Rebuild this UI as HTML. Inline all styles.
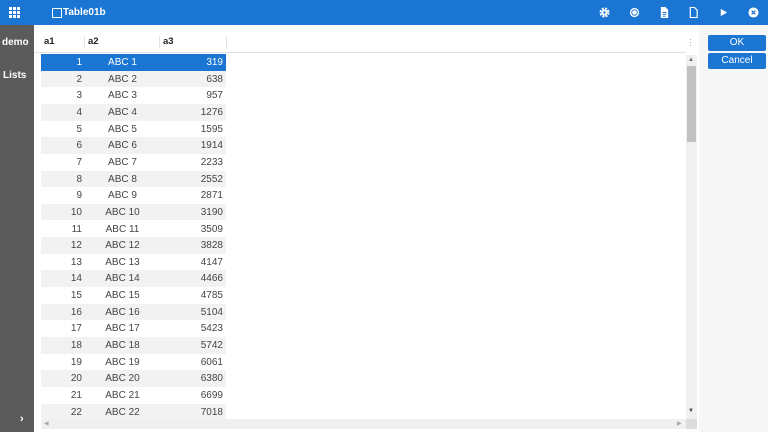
<!DOCTYPE html>
<html><head><style>
*{margin:0;padding:0;box-sizing:border-box}
body{width:768px;height:432px;overflow:hidden;background:#f0f0f0;font-family:"Liberation Sans",sans-serif;font-size:10px;color:#333;position:relative}
.top{position:absolute;left:0;top:0;width:768px;height:25px;background:#1a76d2}
.side{position:absolute;left:0;top:25px;width:34px;height:407px;background:#5b5b5b;color:#fff;font-weight:bold;font-size:10px}
.main{position:absolute;left:34px;top:25px;width:665px;height:407px;background:#fff}
.right{position:absolute;left:699px;top:25px;width:69px;height:407px;background:#f6f6f6}
.btn{position:absolute;left:708px;width:58px;height:16px;background:#1a76d2;color:#fff;text-align:center;line-height:16px;font-size:10px;border-radius:2px}
.hdr{position:absolute;top:36px;font-weight:bold;font-size:9.5px;color:#222}
.row{position:absolute;left:41px;width:185px;height:16.65px;font-size:10px;line-height:17.5px;color:#444}
.row span{position:absolute}
.c1{right:144px}.c2{left:44px;width:75px;text-align:center}.c3{right:3px}
.ico{position:absolute;top:7px;width:11px;height:11px}
</style></head><body>
<div class="top">
<svg style="position:absolute;left:9px;top:7px" width="11" height="11" fill="#fff"><rect x="0" y="0" width="3" height="3"/><rect x="4" y="0" width="3" height="3"/><rect x="8" y="0" width="3" height="3"/><rect x="0" y="4" width="3" height="3"/><rect x="4" y="4" width="3" height="3"/><rect x="8" y="4" width="3" height="3"/><rect x="0" y="8" width="3" height="3"/><rect x="4" y="8" width="3" height="3"/><rect x="8" y="8" width="3" height="3"/></svg>
<div style="position:absolute;left:52px;top:8px;width:10px;height:10px;border:1.5px solid #fff"></div>
<div style="position:absolute;left:63px;top:7px;color:#fff;font-size:10px;font-weight:bold">Table01b</div>
<svg class="ico" style="left:599px" viewBox="0 0 12 12"><circle cx="6" cy="6" r="4" fill="none" stroke="#fff" stroke-width="3" stroke-dasharray="2 1.2"/><circle cx="6" cy="6" r="3.2" fill="#fff"/><circle cx="6" cy="6" r="1.3" fill="#1a76d2"/></svg>
<svg class="ico" style="left:629px" viewBox="0 0 12 12"><circle cx="6" cy="6" r="5" fill="#fff"/><circle cx="6" cy="6" r="3" fill="none" stroke="#1a76d2" stroke-width="1"/></svg>
<svg class="ico" style="left:659px" viewBox="0 0 12 12"><path d="M2 0h5l3 3v9H2z" fill="#fff"/><path d="M4 6h4M4 8h4M4 10h3" stroke="#1a76d2"/></svg>
<svg class="ico" style="left:688px" viewBox="0 0 12 12"><path d="M2.5 .5h4.5l3 3v8h-7.5z" fill="none" stroke="#fff" stroke-width="1.3"/></svg>
<svg class="ico" style="left:718px" viewBox="0 0 12 12"><path d="M3 2l7 4-7 4z" fill="#fff"/></svg>
<svg class="ico" style="left:748px" viewBox="0 0 12 12"><circle cx="6" cy="6" r="5.5" fill="#fff"/><path d="M4 4l4 4M8 4l-4 4" stroke="#1a76d2" stroke-width="1.4"/></svg>
</div>
<div class="side"><div style="position:absolute;left:2px;top:12px">demo</div><div style="position:absolute;left:3px;top:45px">Lists</div><div style="position:absolute;left:20px;top:388px;font-size:11px">›</div></div>
<div class="main"></div>
<div class="right"></div>
<div style="position:absolute;left:34px;top:52px;width:652px;height:1px;background:#e2e2e2"></div>
<div class="hdr" style="left:44px">a1</div><div class="hdr" style="left:88px">a2</div><div class="hdr" style="left:163px">a3</div>
<div style="position:absolute;left:84px;top:36px;width:1px;height:12px;background:#e4e4e4"></div>
<div style="position:absolute;left:159px;top:36px;width:1px;height:12px;background:#e4e4e4"></div>
<div style="position:absolute;left:226px;top:36px;width:1px;height:12px;background:#e4e4e4"></div>
<div style="position:absolute;left:689px;top:38px;color:#aaa;font-size:9px;line-height:3px">·<br>·<br>·</div>
<div id="rows"></div>
<div style="position:absolute;left:686px;top:55px;width:11px;height:364px;background:#f0f0f0"></div>
<div style="position:absolute;left:687px;top:66px;width:9px;height:76px;background:#c2c2c2"></div>
<div style="position:absolute;left:688px;top:57px;font-size:6px;color:#666">▲</div>
<div style="position:absolute;left:688px;top:408px;font-size:6px;color:#444">▼</div>
<div style="position:absolute;left:41px;top:419px;width:645px;height:10px;background:#f0f0f0"></div>
<div style="position:absolute;left:686px;top:419px;width:11px;height:10px;background:#ddd"></div>
<div style="position:absolute;left:44px;top:420px;font-size:6px;color:#aaa">◀</div>
<div style="position:absolute;left:677px;top:420px;font-size:6px;color:#aaa">▶</div>
<div class="btn" style="top:35px">OK</div>
<div class="btn" style="top:53px">Cancel</div>
<script>
var h='';for(var i=1;i<=22;i++){var bg=i==1?'#1a76d2':(i%2==0?'#f2f2f2':'#fff');var c=i==1?'#fff':'#444';
h+='<div class="row" style="top:'+(54+(i-1)*16.65)+'px;background:'+bg+';color:'+c+'"><span class="c1">'+i+'</span><span class="c2">ABC '+i+'</span><span class="c3">'+(319*i)+'</span></div>';}
document.getElementById('rows').innerHTML=h;
</script>
</body></html>
